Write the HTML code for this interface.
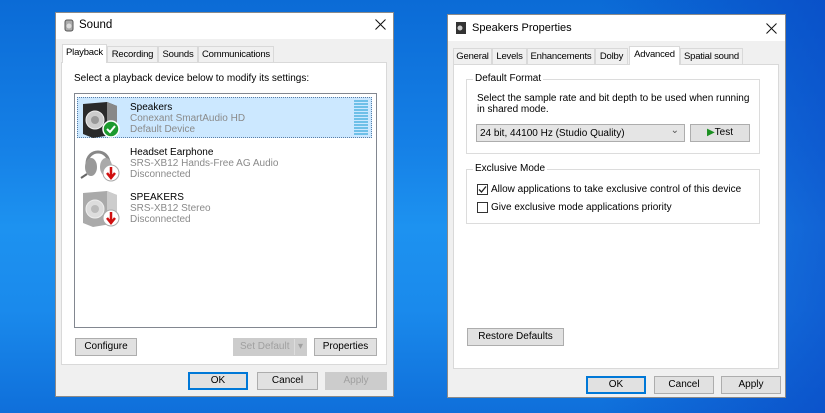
<!DOCTYPE html>
<html><head><meta charset="utf-8"><style>
*{margin:0;padding:0;box-sizing:border-box}
body{width:825px;height:413px;overflow:hidden;position:relative;font-family:"Liberation Sans",sans-serif;font-size:10px;color:#000;white-space:nowrap;
background:linear-gradient(180deg,#0b6bd6 0%,#1580e6 35%,#1d92f0 55%,#1a8aec 75%,#0f6fda 100%)}
.bgr{position:absolute;left:600px;top:0;width:225px;height:413px;background:linear-gradient(90deg,rgba(10,70,190,0),rgba(8,60,190,.55))}
.a{position:absolute}
.win{position:absolute;background:#f0f0f0;border:1px solid #8a8a8a}
.title{position:absolute;left:0;top:0;right:0;height:26px;background:#fff;font-size:11px}
.panel{position:absolute;background:#fff;border:1px solid #d9d9d9}
.tab{position:absolute;height:17px;border:1px solid #d9d9d9;border-bottom:none;background:#f0f0f0;font-size:9.5px;text-align:center;line-height:16px;letter-spacing:-0.2px}
.tab.on{background:#fff;height:19px;z-index:2}
.btn{position:absolute;height:18px;background:#e1e1e1;border:1px solid #adadad;text-align:center;line-height:16px;font-size:10px}
.btn.def{border:1px solid #0078d7;box-shadow:inset 0 0 0 1px #0078d7}
.btn.dis{color:#a0a0a0;border-color:#cccccc;background:#cccccc}
.gray{color:#8a8a8a}
.grp{position:absolute;border:1px solid #dcdcdc}
.grp .lg{position:absolute;top:-7px;left:6px;background:#fff;padding:0 2px;font-size:10px}
.cb{position:absolute;width:11px;height:11px;border:1px solid #333;background:#fff}
.x{position:absolute}
</style></head><body>
<div class="bgr"></div>

<!-- Sound window -->
<div class="win" style="left:55px;top:12px;width:339px;height:385px">
  <div class="title">
    <svg class="a" style="left:8px;top:6px" width="10" height="13" viewBox="0 0 10 13"><rect x="1" y="1" width="8" height="11" rx="2" fill="#aaa" stroke="#555"/><circle cx="5" cy="7" r="2.5" fill="#ddd"/></svg>
    <span class="a" style="left:23px;top:6px;font-size:11.5px">Sound</span>
    <svg class="x" style="left:319px;top:6px" width="11" height="11" viewBox="0 0 11 11"><path d="M0.5 0.5 L10.5 10.5 M10.5 0.5 L0.5 10.5" stroke="#111" stroke-width="1"/></svg>
  </div>
  <div class="tab on" style="left:6px;top:31px;width:45px">Playback</div>
  <div class="tab" style="left:51px;top:33px;width:51px">Recording</div>
  <div class="tab" style="left:102px;top:33px;width:40px">Sounds</div>
  <div class="tab" style="left:142px;top:33px;width:76px">Communications</div>
  <div class="panel" style="left:5px;top:49px;width:326px;height:303px">
    <div class="a" style="left:12px;top:10px">Select a playback device below to modify its settings:</div>
    <div class="a" style="left:12px;top:30px;width:303px;height:235px;border:1px solid #828790">
      <div class="a" style="left:2px;top:3px;width:295px;height:41px;background:#cce8ff;border:1px dotted #5a7fa8"></div>
      <svg class="a" style="left:4px;top:4px" width="44" height="42" viewBox="0 0 44 42"><path d="M4 6 L28 4 L38 8 L38 36 L14 40 L4 36Z" fill="#2a2a2a"/><path d="M28 4 L38 8 L38 36 L28 34Z" fill="#888"/><circle cx="16" cy="22" r="9" fill="#ccc" stroke="#eee"/><circle cx="16" cy="22" r="4" fill="#999"/><circle cx="32" cy="31" r="8" fill="#1c9a2e" stroke="#fff" stroke-width="1.5"/><path d="M28 31 L31 34 L36 28" stroke="#fff" stroke-width="2" fill="none"/></svg>
      <div class="a" style="left:55px;top:8px;line-height:11px">Speakers<br><span class="gray">Conexant SmartAudio HD</span><br><span class="gray">Default Device</span></div>
      <div class="a" style="left:279px;top:6px;width:14px;height:35px;background:repeating-linear-gradient(180deg,#6ec0e8 0 2px,#cce8ff 2px 3px)"></div>
      <svg class="a" style="left:4px;top:48px" width="44" height="42" viewBox="0 0 44 42"><path d="M8 22 C8 6 30 6 30 22" stroke="#888" stroke-width="3" fill="none"/><ellipse cx="12" cy="25" rx="6" ry="9" fill="#999"/><ellipse cx="27" cy="25" rx="6" ry="9" fill="#aaa"/><path d="M8 32 L2 36" stroke="#666" stroke-width="2"/><circle cx="32" cy="31" r="8" fill="#fff" stroke="#aaa"/><path d="M32 25 V34 M28 31 L32 36 L36 31" stroke="#d01010" stroke-width="2.5" fill="none"/></svg>
      <div class="a" style="left:55px;top:53px;line-height:11px">Headset Earphone<br><span class="gray">SRS-XB12 Hands-Free AG Audio</span><br><span class="gray">Disconnected</span></div>
      <svg class="a" style="left:4px;top:93px" width="44" height="42" viewBox="0 0 44 42"><path d="M4 6 L28 4 L38 8 L38 36 L14 40 L4 36Z" fill="#aaa"/><path d="M28 4 L38 8 L38 36 L28 34Z" fill="#ccc"/><circle cx="16" cy="22" r="9" fill="#ddd" stroke="#eee"/><circle cx="16" cy="22" r="4" fill="#bbb"/><circle cx="32" cy="31" r="8" fill="#fff" stroke="#aaa"/><path d="M32 25 V34 M28 31 L32 36 L36 31" stroke="#d01010" stroke-width="2.5" fill="none"/></svg>
      <div class="a" style="left:55px;top:98px;line-height:11px">SPEAKERS<br><span class="gray">SRS-XB12 Stereo</span><br><span class="gray">Disconnected</span></div>
    </div>
    <div class="btn" style="left:13px;top:275px;width:62px">Configure</div>
    <div class="btn dis" style="left:171px;top:275px;width:74px;text-align:left;padding-left:6px">Set Default<span style="position:absolute;right:0;top:0;width:12px;border-left:1px solid #ddd;text-align:center">▾</span></div>
    <div class="btn" style="left:252px;top:275px;width:63px">Properties</div>
  </div>
  <div class="btn def" style="left:132px;top:359px;width:60px">OK</div>
  <div class="btn" style="left:201px;top:359px;width:61px">Cancel</div>
  <div class="btn dis" style="left:269px;top:359px;width:62px">Apply</div>
</div>

<!-- Speakers Properties -->
<div class="win" style="left:447px;top:14px;width:339px;height:384px">
  <div class="title">
    <svg class="a" style="left:8px;top:7px" width="10" height="12" viewBox="0 0 10 12"><rect x="0" y="0" width="10" height="12" fill="#333"/><circle cx="4" cy="6" r="2.5" fill="#ccc"/></svg>
    <span class="a" style="left:24px;top:7px;font-size:11px">Speakers Properties</span>
    <svg class="x" style="left:318px;top:8px" width="11" height="11" viewBox="0 0 11 11"><path d="M0.5 0.5 L10.5 10.5 M10.5 0.5 L0.5 10.5" stroke="#111" stroke-width="1"/></svg>
  </div>
  <div class="tab" style="left:5px;top:33px;width:39px">General</div>
  <div class="tab" style="left:44px;top:33px;width:35px">Levels</div>
  <div class="tab" style="left:79px;top:33px;width:68px">Enhancements</div>
  <div class="tab" style="left:147px;top:33px;width:33px">Dolby</div>
  <div class="tab on" style="left:181px;top:31px;width:51px">Advanced</div>
  <div class="tab" style="left:232px;top:33px;width:63px">Spatial sound</div>
  <div class="panel" style="left:5px;top:49px;width:326px;height:305px">
    <div class="grp" style="left:12px;top:14px;width:294px;height:75px"><span class="lg">Default Format</span>
      <div class="a" style="left:10px;top:13px;line-height:11px">Select the sample rate and bit depth to be used when running<br>in shared mode.</div>
      <div class="a" style="left:9px;top:44px;width:209px;height:18px;background:#e5e5e5;border:1px solid #adadad;padding:3px 0 0 3px">24 bit, 44100 Hz (Studio Quality)<span style="position:absolute;right:5px;top:0;color:#555">⌄</span></div>
      <div class="btn" style="left:223px;top:44px;width:60px"><span style="color:#1a8f20">▶</span>Test</div>
    </div>
    <div class="grp" style="left:12px;top:104px;width:294px;height:55px"><span class="lg">Exclusive Mode</span>
      <div class="cb" style="left:10px;top:14px"><svg width="9" height="9" viewBox="0 0 9 9" style="position:absolute;left:0;top:0"><path d="M1 4.5 L3.5 7 L8 1.5" stroke="#222" stroke-width="1.3" fill="none"/></svg></div>
      <div class="a" style="left:24px;top:14px">Allow applications to take exclusive control of this device</div>
      <div class="cb" style="left:10px;top:32px"></div>
      <div class="a" style="left:24px;top:32px">Give exclusive mode applications priority</div>
    </div>
    <div class="btn" style="left:13px;top:263px;width:97px">Restore Defaults</div>
  </div>
  <div class="btn def" style="left:138px;top:361px;width:60px">OK</div>
  <div class="btn" style="left:206px;top:361px;width:60px">Cancel</div>
  <div class="btn" style="left:273px;top:361px;width:60px">Apply</div>
</div>
</body></html>
